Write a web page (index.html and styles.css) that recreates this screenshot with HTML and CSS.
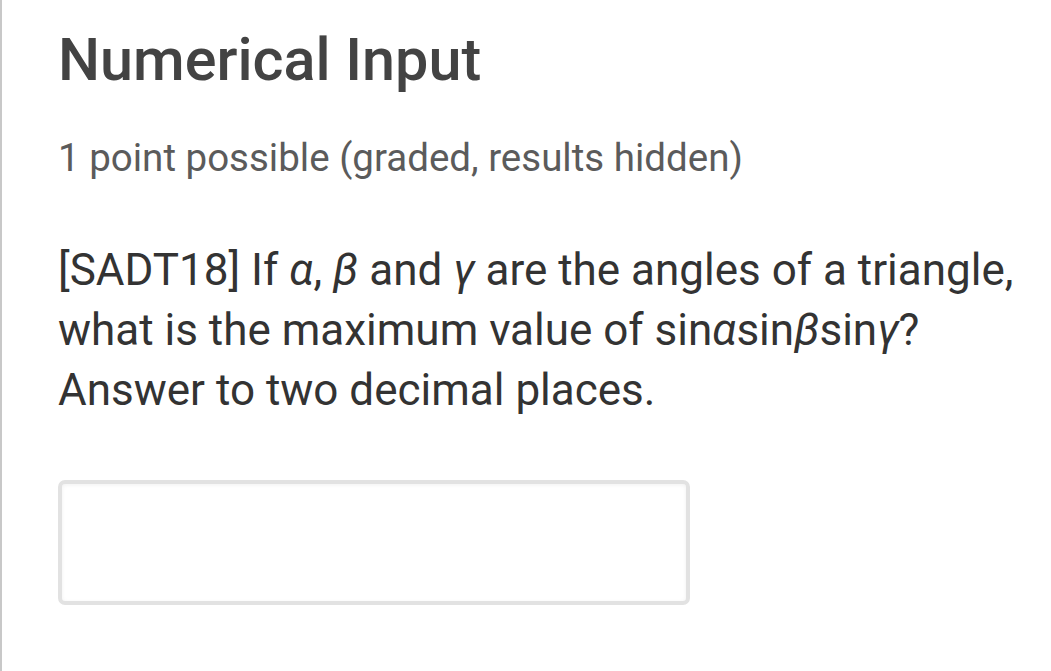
FILE: index.html
```html
<!DOCTYPE html>
<html>
<head>
<meta charset="utf-8">
<link rel="stylesheet" href="styles.css">
</head>
<body>
<div class="page">
  <h2 class="title">Numerical Input</h2>
  <div class="meta">1 point possible (graded, results hidden)</div>
  <p class="question">[SADT18] If <i>α</i>, <i>β</i> and <i>γ</i> are the angles of a triangle, what is the maximum value of sin<i>α</i>sin<i>β</i>sin<i>γ</i>? Answer to two decimal places.</p>
  <div class="field"><input class="answer" type="text" aria-label="answer"></div>
</div>
</body>
</html>
```
FILE: styles.css
```css
html, body {
  margin: 0;
  padding: 0;
  background: #fff;
}
body {
  font-family: Roboto, "Liberation Sans", sans-serif;
}
.page {
  box-sizing: border-box;
  height: 671px;
  border-left: 2px solid #c8c8c8;
  padding: 24px 20px 0 56px;
}
.title {
  margin: 0;
  font-size: 59.3px;
  font-weight: 500;
  color: #434343;
  line-height: 72px;
}
.meta {
  margin-top: 40px;
  font-size: 38.5px;
  line-height: 44px;
  color: #5b5b5b;
}
.question {
  margin: 60px 0 0;
  font-size: 44px;
  line-height: 60px;
  color: #333;
}
.question i {
  font-style: italic;
}
.field {
  margin-top: 60px;
}
.answer {
  display: block;
  box-sizing: border-box;
  width: 632px;
  height: 125px;
  border: 4px solid #e2e2e2;
  border-radius: 7px;
  box-shadow: inset 0 1px 4px rgba(0,0,0,0.06);
  background: #fff;
  outline: none;
}
```
